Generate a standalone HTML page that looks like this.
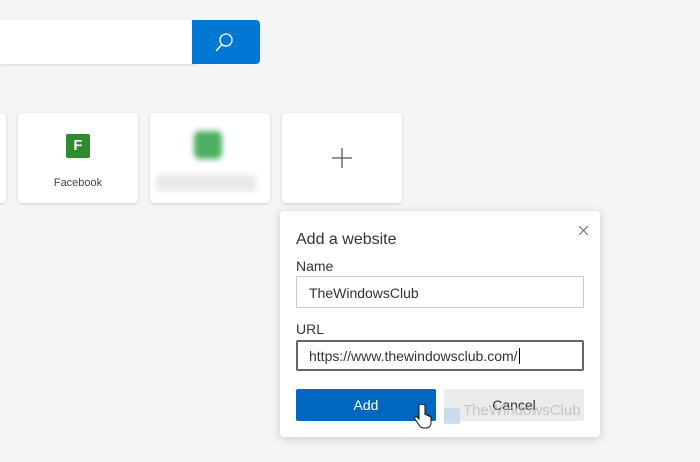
<!DOCTYPE html>
<html><head><style>
*{margin:0;padding:0;box-sizing:border-box}
body{width:700px;height:462px;background:#f5f5f5;font-family:"Liberation Sans",sans-serif;position:relative;overflow:hidden;color:#333}
.abs{position:absolute}
.tile{position:absolute;top:113px;width:120px;height:90px;background:#fff;border-radius:4px;box-shadow:0 1px 3px rgba(0,0,0,.15)}
</style></head><body>
<div class="abs" style="left:0;top:20px;width:196px;height:44px;background:#fff;box-shadow:0 1px 3px rgba(0,0,0,.12)"></div>
<div class="abs" style="left:192px;top:20px;width:68px;height:44px;background:#0078d4;border-radius:0 4px 4px 0">
<svg width="68" height="44"><circle cx="34" cy="20" r="6" stroke="#fff" stroke-width="1.3" fill="none"/><line x1="30" y1="24.5" x2="24" y2="31" stroke="#fff" stroke-width="1.3"/></svg></div>
<div class="tile" style="left:-114px"></div>
<div class="tile" style="left:18px">
<div class="abs" style="left:48px;top:21px;width:24px;height:24px;background:#2e8b2e;border-radius:2px;color:#fff;font-weight:bold;font-size:15px;text-align:center;line-height:24px">F</div>
<div class="abs" style="left:0;top:64px;width:120px;text-align:center;font-size:11px;color:#444">Facebook</div></div>
<div class="tile" style="left:150px">
<div class="abs" style="left:44px;top:18px;width:28px;height:28px;background:#4caf60;border-radius:6px;filter:blur(3px)"></div>
<div class="abs" style="left:6px;top:62px;width:100px;height:16px;background:#e8e8e8;filter:blur(3px)"></div></div>
<div class="tile" style="left:282px">
<svg class="abs" style="left:50px;top:35px" width="20" height="20"><line x1="10" y1="0" x2="10" y2="20" stroke="#555" stroke-width="1.3"/><line x1="0" y1="10" x2="20" y2="10" stroke="#555" stroke-width="1.3"/></svg></div>
<div class="abs" style="left:280px;top:211px;width:320px;height:226px;background:#fff;border-radius:4px;box-shadow:0 2px 10px rgba(0,0,0,.18)">
<div class="abs" style="left:16px;top:20px;font-size:16px;color:#333">Add a website</div>
<svg class="abs" style="left:299px;top:15px" width="9" height="9"><path d="M0 0L9 9M9 0L0 9" stroke="#666" stroke-width="1"/></svg>
<div class="abs" style="left:16px;top:47px;font-size:14px;color:#333">Name</div>
<div class="abs" style="left:16px;top:65px;width:288px;height:32px;border:1px solid #c8c8c8;border-radius:2px;font-size:14px;padding:8px 12px;color:#333">TheWindowsClub</div>
<div class="abs" style="left:16px;top:110px;font-size:14px;color:#333">URL</div>
<div class="abs" style="left:16px;top:129px;width:288px;height:31px;border:2px solid #666;border-radius:2px;font-size:14px;padding:6px 11px;color:#333">https://www.thewindowsclub.com/<span style="border-left:1px solid #000;margin-left:1px"></span></div>
<div class="abs" style="left:16px;top:178px;width:140px;height:32px;background:#0067c0;border-radius:2px;color:#fff;font-size:14px;text-align:center;line-height:32px">Add</div>
<div class="abs" style="left:164px;top:178px;width:140px;height:32px;background:#ebebeb;border-radius:2px;color:#333;font-size:14px;text-align:center;line-height:32px">Cancel</div>
<div class="abs" style="left:164px;top:197px;width:16px;height:16px;background:#bcd4ea;opacity:.7"></div>
<div class="abs" style="left:183px;top:191px;font-size:15px;color:#bbb;opacity:.8">TheWindowsClub</div>
<svg class="abs" style="left:134px;top:193px" width="18" height="26"><path d="M5 1v14l-2-2c-1-1-3 0-2 2l4 6c1 2 3 3 5 3h2c3 0 5-2 5-5v-6c0-1-2-1-2 0v-1c0-1-2-1-2 0v-1c0-1-2-1-2 0V1C7 0 5 0 5 1z" fill="#fff" stroke="#111" stroke-width="1"/></svg>
</div>
</body></html>
